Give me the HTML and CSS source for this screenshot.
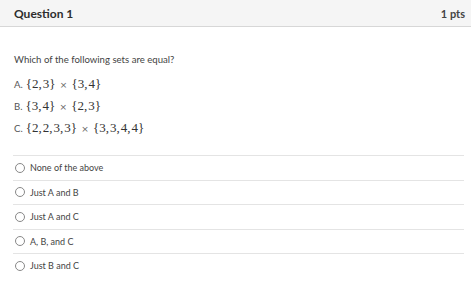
FILE: index.html
```html
<!DOCTYPE html>
<html>
<head>
<meta charset="utf-8">
<link rel="stylesheet" href="styles.css">
</head>
<body>
<div class="question">
  <div class="header">
    <span class="title">Question 1</span>
    <span class="pts">1 pts</span>
  </div>
  <div class="body">
    <p class="prompt">Which of the following sets are equal?</p>
    <p class="line">A. <span class="math">{2,<span class="ts"></span>3} <span class="op">×</span> {3,<span class="ts"></span>4}</span></p>
    <p class="line">B. <span class="math">{3,<span class="ts"></span>4} <span class="op">×</span> {2,<span class="ts"></span>3}</span></p>
    <p class="line">C. <span class="math">{2,<span class="ts"></span>2,<span class="ts"></span>3,<span class="ts"></span>3} <span class="op">×</span> {3,<span class="ts"></span>3,<span class="ts"></span>4,<span class="ts"></span>4}</span></p>
    <div class="answers">
      <label class="answer"><span class="radio"></span>None of the above</label>
      <label class="answer"><span class="radio"></span>Just A and B</label>
      <label class="answer"><span class="radio"></span>Just A and C</label>
      <label class="answer"><span class="radio"></span>A, B, and C</label>
      <label class="answer"><span class="radio"></span>Just B and C</label>
    </div>
  </div>
</div>
</body>
</html>
```
FILE: styles.css
```css
html, body {
  margin: 0;
  padding: 0;
  background: #fff;
}
body {
  font-family: Lato, "Open Sans", sans-serif;
  color: #2d3b45;
}
.question {
  width: 471px;
}
.header {
  height: 27px;
  background: #f5f5f5;
  border-bottom: 1px solid #d7d7d7;
  display: flex;
  align-items: center;
  justify-content: space-between;
  padding: 0 6px 0 14px;
  box-sizing: border-box;
}
.title {
  font-weight: bold;
  font-size: 12px;
  color: #2d2d2d;
}
.pts {
  font-size: 11px;
  font-weight: bold;
  color: #444;
}
.body {
  padding: 26px 7px 0 14px;
}
.prompt {
  margin: 0 0 6px;
  font-size: 9.6px;
  color: #444;
  line-height: 14px;
}
.line {
  margin: 0;
  height: 22px;
  display: flex;
  align-items: center;
  font-size: 9.6px;
  color: #555;
}
.math {
  font-family: "Liberation Serif", "DejaVu Serif", serif;
  font-size: 13px;
  color: #333;
  margin-left: 3px;
  white-space: pre;
}
.ts {
  display: inline-block;
  width: 1px;
}
.op {
  font-family: "DejaVu Sans", sans-serif;
  font-size: 9px;
  margin: 0 1px;
  color: #666;
}
.answers {
  margin-top: 16px;
  margin-left: -1px;
}
.answer {
  display: flex;
  align-items: center;
  height: 23.5px;
  border-top: 1px solid #e4e4e4;
  font-size: 9px;
  color: #444;
}
.radio {
  width: 8px;
  height: 8px;
  border: 1px solid #888;
  border-radius: 50%;
  margin: 0 5px 0 2px;
  box-sizing: content-box;
}
```
